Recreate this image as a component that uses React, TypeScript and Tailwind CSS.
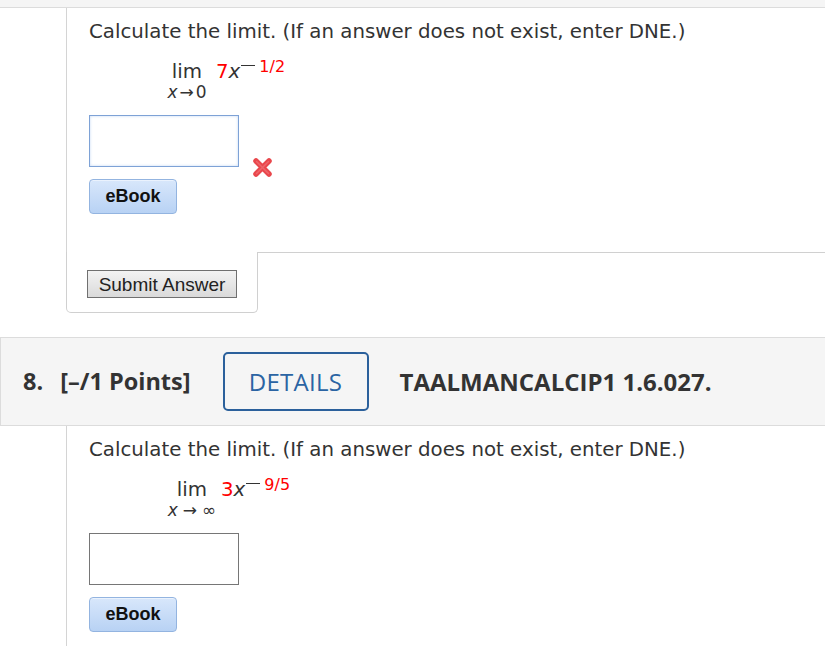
import React from 'react'

function RedX() {
  return (
    <svg width="21" height="21" viewBox="0 0 21 21" className="block">
      <path d="M4 4 L17 17 M17 4 L4 17" stroke="#e9474c" strokeWidth="5.5" strokeLinecap="round" />
      <path d="M4.5 4.5 L16.5 16.5 M16.5 4.5 L4.5 16.5" stroke="#f27c80" strokeWidth="1.5" strokeLinecap="round" opacity="0.6" />
    </svg>
  )
}

function EBook() {
  return (
    <button className="mt-[1px] w-[88px] h-[35px] rounded-[4px] border border-[#93b4e0] bg-gradient-to-b from-[#d8e7fb] to-[#b8d2f4] text-[18px] font-bold text-[#111] font-['Liberation_Sans',Arial,sans-serif] shadow-[inset_0_1px_0_#eaf2fd]">
      eBook
    </button>
  )
}

type LimProps = { sub: React.ReactNode; coef: string; exp: string; subW: string; exprMl: string }

function Limit({ sub, coef, exp, subW, exprMl }: LimProps) {
  return (
    <div className="mt-[12px] ml-[78px] flex items-baseline font-['DejaVu_Sans',sans-serif] text-[#333]">
      <div className={`flex flex-col items-center ${subW}`}>
        <span className="text-[19.8px] leading-[21px]">lim</span>
        <span className="text-[17px] leading-[20px] whitespace-pre flex items-baseline">{sub}</span>
      </div>
      <span className={`text-[19.8px] leading-[21px] whitespace-nowrap ${exprMl}`}>
        <span className="text-[#f00]">{coef}</span>
        <i>x</i>
        <span className="text-[16px] align-[6px] ml-[1px]">
          <span className="inline-block w-[14px] h-[1px] bg-[#333] align-[6px]" />
          <span className="text-[#f00] ml-[4px]">{exp}</span>
        </span>
      </span>
    </div>
  )
}

type BodyProps = LimProps & { wrong: boolean; h: string }

function QuestionBody({ sub, coef, exp, subW, exprMl, wrong, h }: BodyProps) {
  return (
    <div className={`ml-[66px] border-l border-[#d4d4d4] pl-[22px] pt-[12px] ${h}`}>
      <p className="text-[19.8px] leading-[24px] text-[#333] font-['DejaVu_Sans',sans-serif] whitespace-nowrap">
        Calculate the limit. (If an answer does not exist, enter DNE.)
      </p>
      <Limit sub={sub} coef={coef} exp={exp} subW={subW} exprMl={exprMl} />
      <div className="mt-[13px] flex items-end">
        {wrong ? (
          <div className="mb-[11px] w-[150px] h-[52px] border border-[#7ea2d6] bg-white shadow-[inset_0_0_3px_#c4d8f3]" />
        ) : (
          <div className="mb-[11px] w-[150px] h-[52px] border border-[#767676] bg-white" />
        )}
        {wrong ? (
          <div className="ml-[13px]">
            <RedX />
          </div>
        ) : (
          <div className="w-0 h-[21px]" />
        )}
      </div>
      <EBook />
    </div>
  )
}

export default function App() {
  return (
    <div className="w-[825px] h-[646px] overflow-hidden bg-white flex flex-col">
      {/* question 7 tail */}
      <div className="h-[8px] shrink-0 bg-[#f5f5f5] border-b border-[#dcdcdc]" />
      <QuestionBody
        h="h-[244px] shrink-0"
        sub={<><i>x</i><span className="mx-[2px]">→</span>0</>}
        coef="7"
        exp="1/2"
        subW="w-[40px]"
        exprMl="ml-[9px]"
        wrong
      />
      <div className="flex shrink-0">
        <div className="ml-[66px] w-[192px] border-l border-r border-b border-[#d0d0d0] rounded-b-[5px] pt-[18px] pb-[14px] pl-[20px]">
          <button className="w-[150px] h-[28px] border border-[#707070] bg-gradient-to-b from-[#f3f3f3] to-[#dadada] text-[19px] leading-none text-[#222] font-['Liberation_Sans',Arial,sans-serif]">
            Submit Answer
          </button>
        </div>
        <div className="flex-1 border-t border-[#d0d0d0]" />
      </div>

      {/* question 8 */}
      <div className="mt-[24px] h-[89px] shrink-0 border-y border-l border-[#dcdcdc] bg-[#f5f5f5] flex items-center pl-[22px] font-['Open_Sans',sans-serif] text-[#333]">
        <span className="text-[23.5px] font-bold mr-[17px]">8.</span>
        <span className="text-[23.5px] font-bold">[–/1 Points]</span>
        <div className="ml-[32px] w-[146px] h-[59px] rounded-[5px] border-2 border-[#2b609b] flex items-center justify-center text-[24px] text-[#2b64a3] tracking-[0.3px]">
          DETAILS
        </div>
        <span className="ml-[31px] text-[24px] font-bold">TAALMANCALCIP1 1.6.027.</span>
      </div>
      <QuestionBody
        h="flex-1"
        sub={<><i>x</i><span className="mx-[5px]">→</span>∞</>}
        coef="3"
        exp="9/5"
        subW="w-[50px]"
        exprMl="ml-[4px]"
        wrong={false}
      />
    </div>
  )
}
